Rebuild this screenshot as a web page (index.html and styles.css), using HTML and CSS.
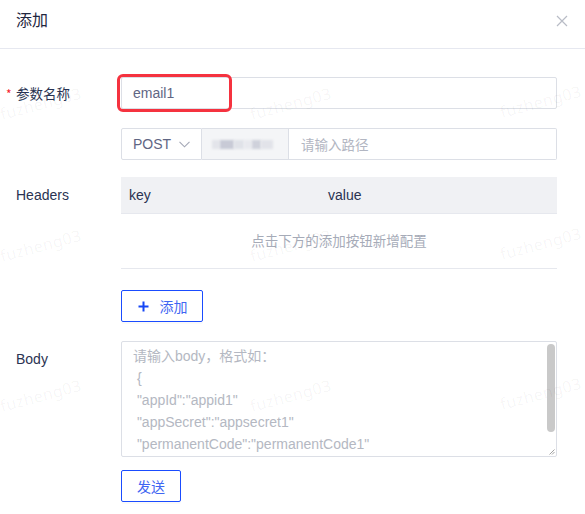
FILE: index.html
```html
<!DOCTYPE html>
<html lang="zh-CN">
<head>
<meta charset="utf-8">
<title>添加</title>
<link rel="stylesheet" href="styles.css">
</head>
<body>
<div class="dialog">
  <div class="dlg-header">
    <span class="dlg-title">添加</span>
    <svg class="dlg-close" width="12" height="12" viewBox="0 0 12 12"><path d="M1 1 L11 11 M11 1 L1 11" stroke="#b8bcc6" stroke-width="1.2" fill="none"/></svg>
  </div>
  <div class="dlg-body">
    <div class="row row-name">
      <label class="lbl"><span class="req">*</span>参数名称</label>
      <div class="ctl">
        <div class="input">
          <span class="val">email1</span>
          <span class="highlight"></span>
        </div>
      </div>
    </div>
    <div class="row row-url">
      <div class="lbl"></div>
      <div class="ctl">
        <div class="url-group">
          <div class="method">POST
            <svg class="chev" width="11" height="7" viewBox="0 0 11 7"><path d="M0.5 0.8 L5.5 5.8 L10.5 0.8" stroke="#a4a8b6" stroke-width="1.1" fill="none"/></svg>
          </div>
          <div class="host"><span class="blur b1"></span><span class="blur b2"></span><span class="blur b3"></span><span class="blur b4"></span><span class="blur b5"></span><span class="blur b6"></span></div>
          <div class="path"><span class="ph">请输入路径</span></div>
        </div>
      </div>
    </div>
    <div class="row row-headers">
      <label class="lbl lbl-headers">Headers</label>
      <div class="ctl">
        <div class="table">
          <div class="thead"><div class="th th-key">key</div><div class="th th-val">value</div></div>
          <div class="empty">点击下方的添加按钮新增配置</div>
        </div>
        <button class="btn btn-add"><svg class="plus" width="11" height="11" viewBox="0 0 11 11"><path d="M5.5 0.5 V10.5 M0.5 5.5 H10.5" stroke="#1546f5" stroke-width="2" fill="none"/></svg><span>添加</span></button>
      </div>
    </div>
    <div class="row row-body">
      <label class="lbl lbl-body">Body</label>
      <div class="ctl">
        <div class="textarea">
          <div class="ta-text">请输入body，格式如：
 {
 "appId":"appid1"
 "appSecret":"appsecret1"
 "permanentCode":"permanentCode1"</div>
          <span class="thumb"></span>
          <svg class="grip" width="7" height="7" viewBox="0 0 7 7"><path d="M6.5 1.5 L1.5 6.5 M6.5 4 L4 6.5" stroke="#8a8a8a" stroke-width="0.8" fill="none"/></svg>
        </div>
        <button class="btn btn-send">发送</button>
      </div>
    </div>
  </div>
  <div class="watermarks">
    <span class="wm" style="left:3px;top:104px">fuzheng03</span>
    <span class="wm" style="left:253px;top:104px">fuzheng03</span>
    <span class="wm" style="left:503px;top:102px">fuzheng03</span>
    <span class="wm" style="left:3px;top:246px">fuzheng03</span>
    <span class="wm" style="left:253px;top:246px">fuzheng03</span>
    <span class="wm" style="left:503px;top:244px">fuzheng03</span>
    <span class="wm" style="left:3px;top:396px">fuzheng03</span>
    <span class="wm" style="left:253px;top:396px">fuzheng03</span>
    <span class="wm" style="left:503px;top:394px">fuzheng03</span>
  </div>
</div>
</body>
</html>
```
FILE: styles.css
```css
* { box-sizing: border-box; }
html, body { margin: 0; padding: 0; background: #fff; }
body {
  font-family: "Liberation Sans", Arial, "Noto Sans CJK SC", sans-serif;
  font-size: 14px;
  color: #2a3352;
  width: 585px;
  height: 514px;
  overflow: hidden;
}
.dialog { position: relative; width: 585px; height: 514px; overflow: hidden; }
.dlg-header {
  height: 49px;
  border-bottom: 1px solid #e6e8f0;
  display: flex;
  align-items: flex-start;
  justify-content: space-between;
  padding: 0 15px 0 16px;
}
.dlg-title {
  font-size: 16px;
  line-height: 20px;
  margin-top: 9px;
  color: #1f2740;
  font-family: "Noto Sans CJK SC", sans-serif;
}
.dlg-close { margin-top: 15px; margin-right: 2px; }
.dlg-body { padding-top: 28px; }
.row { display: flex; }
.lbl {
  width: 121px;
  flex: none;
  padding-left: 16px;
  line-height: 32px;
  color: #2a3352;
  position: relative;
  font-family: "Noto Sans CJK SC", sans-serif;
  font-size: 13.5px;
}
.lbl-headers, .lbl-body { font-family: "Liberation Sans", Arial, sans-serif; font-size: 14px; }
.req { position: absolute; left: 6px; top: 1px; color: #f5222d; font-size: 12px; }
.ctl { width: 436px; flex: none; }
.input {
  position: relative;
  height: 32px;
  border: 1px solid #dcdfe6;
  border-radius: 2px;
  padding-left: 11px;
  line-height: 30px;
  color: #5f6684;
}
.val { font-size: 14px; }
.highlight {
  position: absolute;
  left: -5px; top: -4px;
  width: 115px; height: 38px;
  border: 3px solid #f5323f;
  border-radius: 6px;
}
.row-url { margin-top: 19px; }
.url-group { display: flex; height: 32px; }
.method {
  width: 81px;
  border: 1px solid #dcdfe6;
  border-radius: 2px 0 0 2px;
  padding-left: 11px;
  line-height: 30px;
  color: #5f6684;
  display: flex;
  align-items: center;
}
.chev { margin-left: 8px; }
.host {
  width: 87px;
  border: 1px solid #dcdfe6;
  border-left: none;
  background: #f4f5f7;
  display: flex;
  align-items: center;
  padding-left: 10px;
}
.blur { display: inline-block; height: 9px; filter: blur(0.8px); }
.b1 { width: 8px; background: #e3e4ea; }
.b2 { width: 14px; background: #c8cad6; }
.b3 { width: 10px; background: #e0e2e8; }
.b4 { width: 8px; background: #e8e9ee; }
.b5 { width: 9px; background: #cfd1db; }
.b6 { width: 12px; background: #e2e3e9; }
.path {
  flex: 1;
  border: 1px solid #dcdfe6;
  border-left: none;
  border-radius: 0 2px 2px 0;
  padding-left: 12px;
  line-height: 30px;
}
.ph { color: #b2b6c2; font-family: "Noto Sans CJK SC", sans-serif; font-size: 13.5px; }
.row-headers { margin-top: 17px; }
.lbl-headers { line-height: 37px; }
.table { width: 436px; }
.thead {
  display: grid;
  grid-template-columns: 199px 1fr;
  height: 37px;
  background: #f0f1f4;
  border-bottom: 1px solid #e6e8ee;
}
.th { padding-left: 8px; line-height: 37px; color: #2a3352; }
.empty {
  height: 55px;
  border-bottom: 1px solid #e6e8ee;
  text-align: center;
  line-height: 52px;
  color: #a6abb8;
  font-family: "Noto Sans CJK SC", sans-serif;
  font-size: 13.5px;
}
.btn {
  display: flex;
  align-items: center;
  justify-content: center;
  height: 32px;
  border: 1px solid #1a4cff;
  border-radius: 2px;
  background: #fff;
  color: #3f66f2;
  font-family: "Noto Sans CJK SC", sans-serif;
  font-size: 14px;
  padding: 0;
  box-shadow: 0 2px 0 rgba(0,0,0,0.02);
}
.btn-add { margin-top: 21px; width: 82px; }
.plus { margin-right: 11px; margin-left: 1px; }
.row-body { margin-top: 19px; }
.lbl-body { line-height: 36px; }
.textarea {
  position: relative;
  height: 116px;
  border: 1px solid #dcdfe6;
  border-radius: 2px;
  padding: 3px 11px;
  overflow: hidden;
}
.ta-text {
  white-space: pre;
  line-height: 22px;
  color: #b4b8c2;
  font-family: "Liberation Sans", Arial, "Noto Sans CJK SC", sans-serif;
  font-size: 14px;
}
.thumb {
  position: absolute;
  right: 1px; top: 2px;
  width: 8px; height: 88px;
  border-radius: 4px;
  background: #c9c9c9;
}
.grip { position: absolute; right: 1px; bottom: 1px; }
.btn-send { margin-top: 13px; width: 60px; }
.watermarks { position: absolute; inset: 0; pointer-events: none; }
.wm {
  position: absolute;
  font-family: "Noto Sans", sans-serif;
  font-size: 16px;
  line-height: 20px;
  color: rgba(0,0,0,0.045);
  transform: rotate(-15deg);
  transform-origin: left bottom;
  letter-spacing: 0.4px;
  white-space: nowrap;
}
```
